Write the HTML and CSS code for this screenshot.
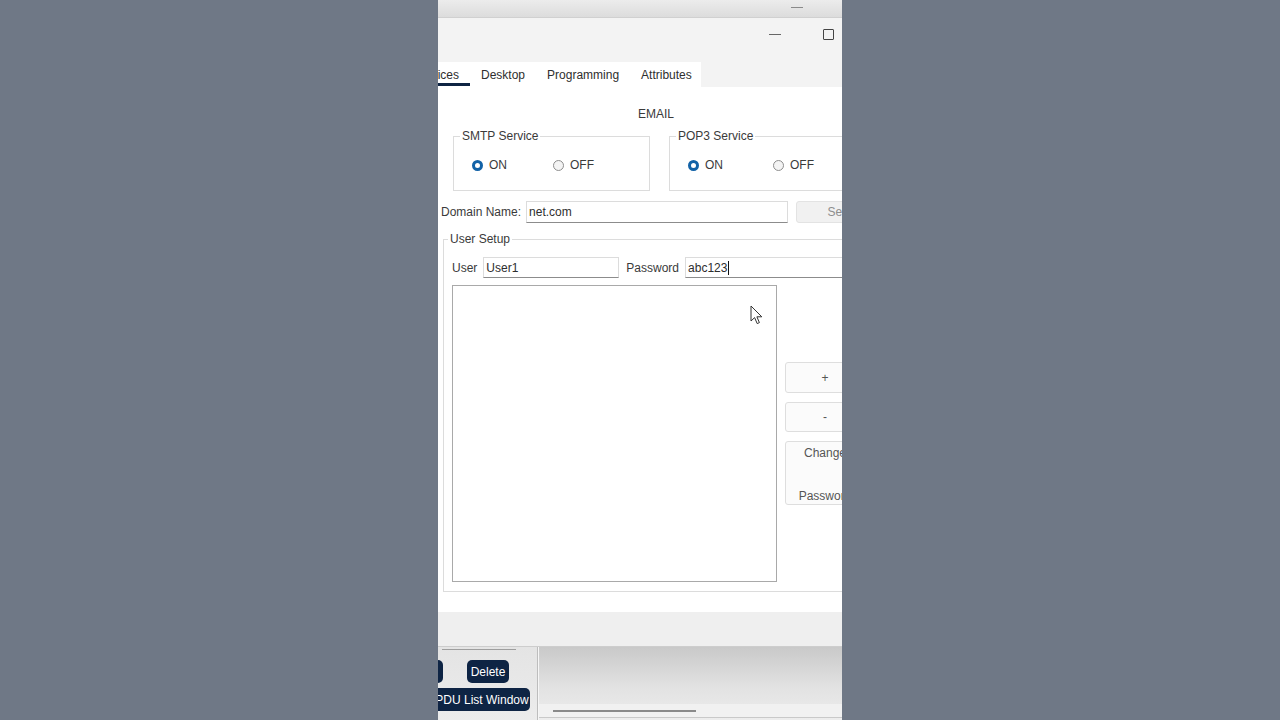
FILE: index.html
```html
<!DOCTYPE html>
<html lang="en">
<head>
<meta charset="utf-8">
<title>Email Service</title>
<link rel="stylesheet" href="styles.css">
</head>
<body>
<main class="panel">
  <div class="topstrip"><span class="dash"></span></div>
  <div class="titlebar"><span class="win-min"></span><span class="win-max"></span></div>
  <nav class="tabbar">
    <div class="tabs">
      <span class="tab active">Services</span>
      <span class="tab">Desktop</span>
      <span class="tab">Programming</span>
      <span class="tab">Attributes</span>
    </div>
  </nav>
  <section class="content">
    <div class="sheet">
      <h1 class="title">EMAIL</h1>
      <div class="groups">
        <fieldset class="group">
          <legend>SMTP Service</legend>
          <div class="radios">
            <span class="opt"><span class="radio on"></span>ON</span>
            <span class="opt"><span class="radio"></span>OFF</span>
          </div>
        </fieldset>
        <fieldset class="group">
          <legend>POP3 Service</legend>
          <div class="radios">
            <span class="opt wide"><span class="radio on"></span>ON</span>
            <span class="opt"><span class="radio"></span>OFF</span>
          </div>
        </fieldset>
      </div>
      <div class="domain-row">
        <span class="label domain-label">Domain Name:</span>
        <div class="field domain-field">net.com</div>
        <div class="btn-set">Set</div>
      </div>
      <fieldset class="user-setup">
        <legend>User Setup</legend>
        <div class="user-row">
          <span class="label">User</span>
          <div class="field user-field">User1</div>
          <span class="label">Password</span>
          <div class="field pass-field">abc123<span class="caret"></span></div>
        </div>
        <div class="list-row">
          <div class="listbox"></div>
          <div class="side-buttons">
            <div class="sbtn plus">+</div>
            <div class="sbtn minus">-</div>
            <div class="sbtn change"><span>Change</span><span>Password</span></div>
          </div>
        </div>
      </fieldset>
    </div>
  </section>
  <div class="band"></div>
  <footer class="bottom">
    <div class="bottom-left">
      <div class="rule"></div>
      <div class="brow">
        <span class="navbtn cut">New</span>
        <span class="navbtn del">Delete</span>
      </div>
      <div class="brow">
        <span class="navbtn pdu">PDU List Window</span>
      </div>
    </div>
    <div class="divider"></div>
    <div class="bottom-right">
      <div class="track"><div class="thumb"></div></div>
    </div>
  </footer>
  <svg class="cursor" width="13" height="20" viewBox="0 0 13 20" aria-hidden="true">
    <path d="M1 1 L1 16 L4.6 12.6 L7.2 18.6 L9.4 17.6 L6.9 11.8 L11.8 11.8 Z" fill="#fff" stroke="#333" stroke-width="1" stroke-linejoin="round"/>
  </svg>
</main>
</body>
</html>
```

FILE: styles.css
```css
* { box-sizing: border-box; }
html, body { margin: 0; padding: 0; }
body {
  background: #6f7886;
  display: flex;
  justify-content: center;
  height: 720px;
  overflow: hidden;
  font-family: "Liberation Sans", Arial, sans-serif;
  font-size: 12px;
  color: #3a3a3a;
}
.panel {
  position: relative;
  width: 404px;
  height: 720px;
  overflow: hidden;
  display: flex;
  flex-direction: column;
  background: #fff;
}
.topstrip {
  height: 18px;
  flex-shrink: 0;
  background: linear-gradient(#ececec, #dcdcdc);
  border-bottom: 1px solid #d0d0d0;
  display: flex;
  justify-content: flex-end;
  padding: 7px 39px 0 0;
}
.dash { width: 12px; height: 1px; background: #8a8a8a; }
.titlebar {
  height: 44px;
  flex-shrink: 0;
  background: #f3f3f3;
  display: flex;
  justify-content: flex-end;
  align-items: flex-start;
  gap: 42px;
  padding: 11px 8px 0 0;
}
.win-min { width: 12px; height: 1px; background: #666; margin-top: 5px; }
.win-max { width: 11px; height: 11px; border: 1.5px solid #444; border-radius: 1px; }
.tabbar {
  height: 25px;
  flex-shrink: 0;
  background: #f3f3f3;
  display: flex;
}
.tabs {
  display: flex;
  background: #fff;
  margin-left: -36px;
}
.tab {
  padding: 6px 11px 1px;
  line-height: 14px;
  border-bottom: 3px solid transparent;
  margin-bottom: 1px;
  color: #2e2e2e;
  white-space: nowrap;
}
.tab:last-child { padding-right: 9px; }
.tab.active { border-bottom-color: #0e2443; }
.content {
  height: 525px;
  flex-shrink: 0;
  background: #fff;
  overflow: hidden;
}
.sheet { width: 436px; }
.title {
  margin: 20px 0 0;
  font-size: 12px;
  font-weight: normal;
  line-height: 14px;
  text-align: center;
  color: #3a3a3a;
}
.groups {
  display: flex;
  gap: 19px;
  margin: 8px 0 0 15px;
}
fieldset { margin: 0; min-width: 0; }
legend {
  padding: 0 2px;
  line-height: 14px;
  color: #3a3a3a;
}
.group {
  width: 197px;
  border: 1px solid #dcdcdc;
  padding: 15px 0 18px 6px;
}
.radios { display: flex; margin-left: 12px; line-height: 14px; }
.opt {
  display: inline-flex;
  align-items: center;
  gap: 6px;
  width: 81px;
  flex-shrink: 0;
}
.opt.wide { width: 85px; }
.radio {
  width: 11px;
  height: 11px;
  border-radius: 50%;
  border: 1px solid #8e8e8e;
  background: #f4f4f4;
  flex-shrink: 0;
}
.radio.on { border: 3.5px solid #1262a7; background: #fff; }
.domain-row {
  display: flex;
  align-items: center;
  margin-top: 10px;
  padding-left: 3px;
}
.domain-label { margin-right: 5px; }
.label { white-space: nowrap; color: #3a3a3a; }
.field {
  background: #fff;
  border: 1px solid #dcdcdc;
  border-bottom-color: #8c8c8c;
  padding: 0 2px;
  white-space: nowrap;
  color: #2e2e2e;
  display: flex;
  align-items: center;
  flex-shrink: 0;
}
.domain-field { width: 262px; height: 22px; margin-right: 8px; }
.btn-set {
  width: 81px;
  height: 22px;
  background: #f1f1f1;
  border: 1px solid #e3e3e3;
  border-radius: 3px;
  color: #8e8e8e;
  display: flex;
  align-items: center;
  justify-content: center;
  flex-shrink: 0;
}
.user-setup {
  width: 431px;
  margin: 9px 0 0 5px;
  border: 1px solid #dcdcdc;
  padding: 0 0 9px 4px;
}
.user-row {
  display: flex;
  align-items: center;
  margin: 11px 0 0 4px;
}
.user-field { width: 136px; height: 21px; margin: 0 7px 0 6px; }
.pass-field { width: 170px; height: 21px; margin-left: 6px; }
.caret { width: 1px; height: 14px; background: #111; margin-left: 1px; }
.list-row {
  display: flex;
  gap: 8px;
  margin: 7px 0 0 4px;
}
.listbox {
  width: 325px;
  height: 297px;
  border: 1px solid #a9a9a9;
  background: #fff;
  flex-shrink: 0;
}
.side-buttons {
  display: flex;
  flex-direction: column;
  gap: 9px;
  padding-top: 77px;
  width: 80px;
  flex-shrink: 0;
}
.sbtn {
  background: #fbfbfb;
  border: 1px solid #dedede;
  border-radius: 3px;
  color: #555;
  display: flex;
  align-items: center;
  justify-content: center;
}
.plus { height: 31px; }
.minus { height: 30px; }
.change {
  height: 64px;
  flex-direction: column;
  justify-content: space-between;
  padding: 4px 0 1px;
  line-height: 14px;
}
.band {
  height: 35px;
  flex-shrink: 0;
  background: #efefef;
  border-bottom: 1px solid #cdcdcd;
}
.bottom {
  height: 73px;
  flex-shrink: 0;
  display: flex;
}
.bottom-left {
  width: 99px;
  flex-shrink: 0;
  background: linear-gradient(#e4e4e4, #ececec);
}
.rule { height: 1px; background: #9e9e9e; margin: 2px 21px 0 4px; }
.brow { display: flex; gap: 24px; margin-top: 10px; }
.brow + .brow { margin-top: 5px; }
.navbtn {
  height: 23px;
  background: #0e2444;
  color: #fff;
  border-radius: 5px;
  display: flex;
  align-items: center;
  justify-content: center;
  white-space: nowrap;
  flex-shrink: 0;
}
.cut { width: 40px; margin-left: -35px; }
.del { width: 42px; }
.pdu { width: 96px; margin-left: -4px; }
.divider {
  width: 2px;
  flex-shrink: 0;
  border-left: 1px solid #bdbdbd;
  border-right: 1px solid #f6f6f6;
}
.bottom-right {
  flex: 1;
  display: flex;
  flex-direction: column;
  justify-content: flex-end;
  background: linear-gradient(#c9c9c9, #e2e2e2 55%, #ededed);
}
.track {
  padding: 6px 0 5px 14px;
  background: #f1f1f1;
  border-bottom: 1px solid #c9c9c9;
  margin-bottom: 2px;
}
.thumb { width: 143px; height: 2px; background: #8a8a8a; }
.cursor { position: absolute; left: 312px; top: 305px; }
```
